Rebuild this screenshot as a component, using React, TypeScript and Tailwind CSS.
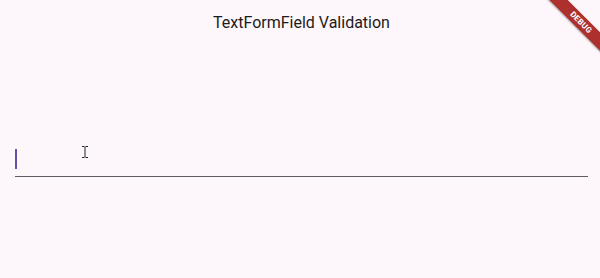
import React from "react";

export default function App() {
  return (
    <div
      className="relative w-[600px] h-[278px] overflow-hidden bg-[#fdf7fb]"
      style={{ fontFamily: "Roboto, 'Noto Sans', sans-serif" }}
    >
      <header className="h-[45px] flex items-center justify-center">
        <h1 className="text-[16px] leading-none text-[#1d1b20] ml-[3px]">TextFormField Validation</h1>
      </header>
      <div className="pl-[15px] pr-[12px] pt-[103px]">
        <div className="relative h-[29px] border-b border-[#5f5b63]">
          <div className="absolute left-[0px] top-[1px] w-[2px] h-[20px] bg-[#6750a4]" />
        </div>
      </div>
      {/* mouse I-beam */}
      <svg className="absolute left-[81px] top-[146px]" width="8" height="12" viewBox="0 0 8 12">
        <path d="M1 0.5h2.5M4.5 0.5h2.5M4 1v10M1 11.5h2.5M4.5 11.5h2.5" stroke="#222" strokeWidth="1" fill="none" />
      </svg>
      {/* debug banner */}
      <div className="absolute left-[540px] top-[16px] w-[82px] h-[13px] rotate-45 bg-[#ad302e] flex items-center justify-center shadow-[0_1px_2px_rgba(0,0,0,0.35)]">
        <span className="text-[8px] font-bold text-white leading-none tracking-[0.3px]">DEBUG</span>
      </div>
    </div>
  );
}
